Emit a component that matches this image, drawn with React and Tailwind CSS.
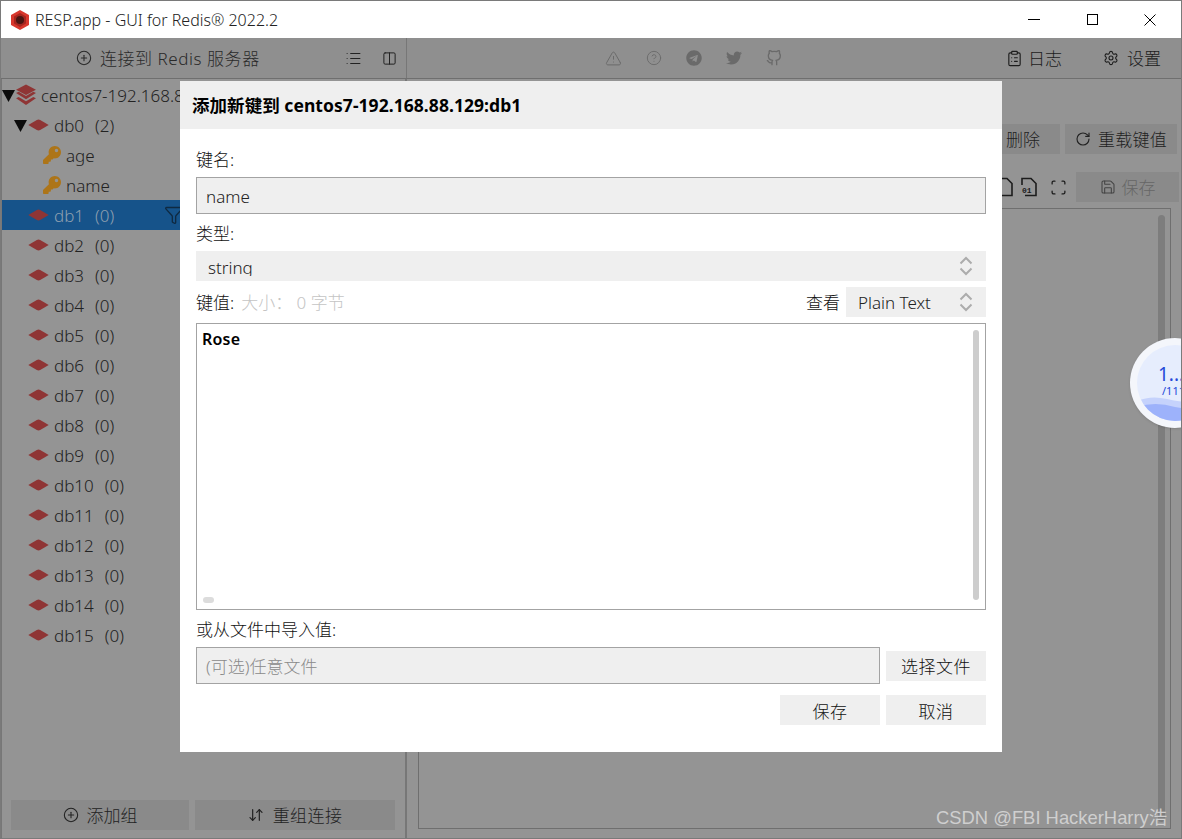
import React from "react";
import { CirclePlus, List, Columns2, TriangleAlert, CircleHelp, ClipboardList, Settings, RotateCw, Save, Scan, Funnel, ArrowDownUp } from "lucide-react";
import { FaTelegram, FaTwitter, FaKey } from "react-icons/fa";
import { FiGithub } from "react-icons/fi";

const font = { fontFamily: '"Noto Sans", "Noto Sans CJK SC", sans-serif' };

function Logo() {
  return (
    <svg width="18" height="20" viewBox="0 0 18 20">
      <polygon points="9,0 18,5 18,15 9,20 0,15 0,5" fill="#d8362c" />
      <polygon points="9,3 15,6.5 15,13.5 9,17 3,13.5 3,6.5" fill="#a5261f" />
      <circle cx="9" cy="10" r="4" fill="#4a1512" />
    </svg>
  );
}

function Diamond() {
  return (
    <svg width="21" height="12" viewBox="0 0 21 12">
      <path d="M0.3 6 L8.8 1 Q10.5 0.2 12.2 1 L20.7 6 L12.2 11 Q10.5 11.8 8.8 11 Z" fill="#8f3535" />
    </svg>
  );
}

function Layers() {
  return (
    <svg width="22" height="22" viewBox="0 0 21 21">
      <path d="M10.5 0.5 L20 5.5 L10.5 10.5 L1 5.5 Z" fill="#8f3535" />
      <path d="M1 8.5 L3.5 7.5 L10.5 11.5 L17.5 7.5 L20 8.5 L10.5 14.5 Z" fill="#8f3535" />
      <path d="M1 13.5 L3.5 12.5 L10.5 16.5 L17.5 12.5 L20 13.5 L10.5 20 Z" fill="#8f3535" />
    </svg>
  );
}

function Tri({ className }) {
  return (
    <svg width="13" height="13" viewBox="0 0 13 13" className={className}>
      <polygon points="0,1 13,1 6.5,13" fill="#0c0c0c" />
    </svg>
  );
}

function UpDown() {
  return (
    <svg width="14" height="20" viewBox="0 0 14 20" fill="none" stroke="#acacac" strokeWidth="2">
      <path d="M1.5 7.5 L7 2 L12.5 7.5" />
      <path d="M1.5 12.5 L7 18 L12.5 12.5" />
    </svg>
  );
}

function FileBin({ label }) {
  return (
    <svg width="18" height="20" viewBox="0 0 18 20" fill="none" stroke="#1c1c1c" strokeWidth="1.6">
      <path d="M2 8 V1.5 H11 L16 6.5 V18.5 H5" />
      <text x="2" y="16" fontSize="8" fontWeight="700" fill="#1c1c1c" stroke="none" fontFamily="Liberation Mono">{label}</text>
    </svg>
  );
}

function DbRow({ name, count, selected }) {
  return (
    <div className={`h-[30px] flex items-center pl-[26px] shrink-0 relative ${selected ? "bg-[#16538a]" : ""}`}>
      <Diamond />
      <span className={`ml-[5px] pt-[1px] text-[17px] font-light ${selected ? "text-[#8d9fb0]" : "text-[#222]"}`}>{name}</span>
      <span className={`ml-[11px] pt-[1px] text-[17px] font-light ${selected ? "text-[#8d9fb0]" : "text-[#222]"}`}>({count})</span>
      {selected && <Funnel size={20} strokeWidth={1.6} className="absolute left-[162px] top-[5px] text-[#0f2a42]" />}
    </div>
  );
}

function KeyRow({ name }) {
  return (
    <div className="h-[30px] flex items-center pl-[41px] shrink-0">
      <FaKey size={18} className="text-[#ad7519]" />
      <span className="ml-[5px] pt-[1px] text-[17px] font-light text-[#222]">{name}</span>
    </div>
  );
}

function DimBtn({ children, className }) {
  return <div className={`h-[30px] bg-[#8a8a8a] flex items-center justify-center text-[17px] text-[#222] ${className}`}>{children}</div>;
}

function LightBtn({ children, className }) {
  return <div className={`w-[100px] h-[30px] bg-[#efefef] flex items-center justify-center pt-[3px] text-[17px] text-[#111] font-light tracking-[0.5px] ${className || ""}`}>{children}</div>;
}

export default function App() {
  const dbs = ["db2", "db3", "db4", "db5", "db6", "db7", "db8", "db9", "db10", "db11", "db12", "db13", "db14", "db15"];
  return (
    <div className="relative w-[1182px] h-[839px] overflow-hidden bg-[#949494] flex flex-col border border-[#7a7a7a]" style={font}>
      {/* Title bar */}
      <div className="h-[37px] bg-white flex items-center pl-[10px] shrink-0">
        <Logo />
        <span className="ml-[6px] text-[16px] text-[#222] font-light">RESP.app - GUI for Redis® 2022.2</span>
        <div className="ml-auto flex items-center pr-[2px]">
          <div className="w-[58px] flex justify-center"><div className="w-[12px] h-px bg-black" /></div>
          <div className="w-[58px] flex justify-center"><div className="w-[11px] h-[11px] border border-black" /></div>
          <div className="w-[58px] flex justify-center">
            <svg width="12" height="12" viewBox="0 0 12 12" stroke="#000" strokeWidth="1"><path d="M0.5 0.5 L11.5 11.5 M11.5 0.5 L0.5 11.5" /></svg>
          </div>
        </div>
      </div>

      {/* Toolbar */}
      <div className="h-[41px] bg-[#8f8f8f] border-b border-[#6f6f6f] flex shrink-0">
        <div className="w-[406px] border-r border-[#777] flex items-center relative">
          <div className="flex items-center absolute left-[75px]">
            <CirclePlus size={16} strokeWidth={1.6} className="text-[#2a2a2a]" />
            <span className="ml-[8px] text-[17px] text-[#2a2a2a] font-light tracking-[0.55px] pt-[1px]">连接到 Redis 服务器</span>
          </div>
          <div className="ml-auto flex items-center gap-[20px] pr-[9px]">
            <List size={17} strokeWidth={1.6} className="text-[#222]" />
            <Columns2 size={15} strokeWidth={1.6} className="text-[#222]" />
          </div>
        </div>
        <div className="flex-1 flex items-center">
          <div className="ml-[198px] flex items-center gap-[24px] text-[#6a6a6a]">
            <TriangleAlert size={17} strokeWidth={1.4} />
            <CircleHelp size={16} strokeWidth={1.4} />
            <FaTelegram size={16} />
            <FaTwitter size={16} />
            <FiGithub size={16} strokeWidth={2} />
          </div>
          <div className="ml-auto flex items-center pr-[20px] text-[#1c1c1c]">
            <ClipboardList size={17} strokeWidth={1.6} />
            <span className="ml-[5px] text-[17px] font-light pt-[1px]">日志</span>
            <Settings size={16} strokeWidth={1.6} className="ml-[41px]" />
            <span className="ml-[8px] text-[17px] font-light pt-[1px]">设置</span>
          </div>
        </div>
      </div>

      {/* Main */}
      <div className="flex-1 flex min-h-0 border-l border-[#777]">
        {/* Sidebar */}
        <div className="w-[405px] border-r-2 border-[#777] flex flex-col shrink-0">
          <div className="flex-1 flex flex-col min-h-0 overflow-hidden pt-[1px]">
            <div className="h-[30px] flex items-center shrink-0">
              <Tri />
              <span className="flex"><Layers /></span>
              <span className="ml-[4px] pt-[1px] text-[17px] font-light text-[#222] whitespace-nowrap">centos7-192.168.88.129</span>
            </div>
            <div className="h-[30px] flex items-center shrink-0 pl-[12px]">
              <Tri />
              <span className="ml-[1px] flex"><Diamond /></span>
              <span className="ml-[5px] pt-[1px] text-[17px] font-light text-[#222]">db0</span>
              <span className="ml-[11px] pt-[1px] text-[17px] font-light text-[#222]">(2)</span>
            </div>
            <KeyRow name="age" />
            <KeyRow name="name" />
            <DbRow name="db1" count="0" selected />
            {dbs.map((d) => <DbRow key={d} name={d} count="0" />)}
          </div>
          <div className="flex gap-[6px] pl-[9px] pb-[8px] shrink-0">
            <DimBtn className="w-[178px]">
              <CirclePlus size={16} strokeWidth={1.6} />
              <span className="ml-[8px] font-light pt-[1px]">添加组</span>
            </DimBtn>
            <DimBtn className="w-[200px]">
              <ArrowDownUp size={16} strokeWidth={1.8} />
              <span className="ml-[9px] font-light pt-[1px] tracking-[0.4px]">重组连接</span>
            </DimBtn>
          </div>
        </div>

        {/* Right panel */}
        <div className="flex-1 flex flex-col pl-[11px] pr-[10px] pb-[9px] min-w-0">
          <div className="flex justify-end gap-[5px] pt-[45px]">
            <DimBtn className="w-[100px] font-light"><span className="ml-[26px] pt-[2px]">删除</span></DimBtn>
            <DimBtn className="w-[112px] mr-[-6px]">
              <RotateCw size={16} strokeWidth={1.7} />
              <span className="ml-[7px] font-light pt-[2px] tracking-[0.3px]">重载键值</span>
            </DimBtn>
          </div>
          <div className="flex justify-end items-center mt-[18px]">
            <FileBin label="" />
            <span className="ml-[6px] flex"><FileBin label="01" /></span>
            <Scan size={17} strokeWidth={1.8} className="ml-[12px] text-[#1c1c1c]" />
            <DimBtn className="w-[103px] ml-[9px] mr-[-8px] text-[#5f5f5f]">
              <Save size={16} strokeWidth={1.6} className="text-[#444]" />
              <span className="ml-[6px] font-light text-[#666] pt-[1px]">保存</span>
            </DimBtn>
          </div>
          <div className="flex-1 mt-[6px] border border-[#6f6f6f] flex justify-end pr-[5px] py-[6px]">
            <div className="w-[7px] h-full bg-[#7d7d7d] rounded-full" />
          </div>
        </div>
      </div>

      {/* Modal dialog */}
      <div className="absolute left-[179px] top-[80px] w-[822px] h-[671px] bg-white flex flex-col">
        <div className="h-[48px] bg-[#efefef] flex items-center pl-[12px] pt-[1px] shrink-0">
          <span className="text-[17.5px] font-bold text-black tracking-[0.05px]">添加新键到 centos7-192.168.88.129:db1</span>
        </div>
        <div className="flex-1 flex flex-col px-[16px] min-h-0">
          <div className="mt-[19px] h-[24px] flex items-center text-[17px] font-light text-[#111]">键名:</div>
          <div className="mt-[5px] h-[37px] bg-[#efefef] border border-[#a3a3a3] flex items-center px-[9px] pt-[2px] text-[17px] font-light text-[#222] shrink-0">name</div>
          <div className="mt-[7px] h-[24px] flex items-center pt-[1px] text-[17px] font-light text-[#111]">类型:</div>
          <div className="mt-[6px] h-[30px] bg-[#efefef] flex items-start pl-[12px] pr-[13px] overflow-hidden shrink-0 relative">
            <span className="text-[17px] font-light text-[#222] leading-[34px] h-[25px] overflow-hidden">string</span>
            <span className="ml-auto mt-[5px]"><UpDown /></span>
          </div>
          <div className="mt-[6px] h-[30px] flex items-center shrink-0">
            <span className="text-[17px] font-light text-[#111] pt-[1px]">键值:</span>
            <span className="ml-[7px] text-[17px] font-light text-[#c4c4c4] pt-[1px] whitespace-pre">大小： 0 字节</span>
            <span className="ml-auto text-[17px] font-light text-[#111] pt-[1px]">查看</span>
            <div className="ml-[6px] w-[140px] h-[30px] bg-[#efefef] flex items-center pl-[12px] pr-[13px]">
              <span className="text-[17px] font-light text-[#222] pt-[1px]">Plain Text</span>
              <span className="ml-auto"><UpDown /></span>
            </div>
          </div>
          <div className="mt-[6px] h-[287px] border border-[#a3a3a3] relative shrink-0 pl-[5px] pt-[3px]">
            <span className="text-[16px] font-semibold text-black leading-[20px] tracking-[0.2px]">Rose</span>
            <div className="absolute right-[6px] top-[6px] bottom-[9px] w-[6px] bg-[#cdcdcd] rounded-full" />
            <div className="absolute left-[6px] bottom-[6px] w-[11px] h-[6px] bg-[#dcdcdc] rounded-full" />
          </div>
          <div className="mt-[7px] h-[24px] flex items-center pt-[1px] text-[17px] font-light text-[#111]">或从文件中导入值:</div>
          <div className="mt-[6px] flex items-center gap-[6px] shrink-0">
            <div className="flex-1 h-[37px] bg-[#efefef] border border-[#a3a3a3] flex items-center px-[9px] pt-[3px] text-[17px] font-light text-[#8a8a8a]">(可选)任意文件</div>
            <LightBtn>选择文件</LightBtn>
          </div>
          <div className="mt-[11px] flex justify-end gap-[6px] shrink-0">
            <LightBtn>保存</LightBtn>
            <LightBtn>取消</LightBtn>
          </div>
        </div>
      </div>

      {/* Floating widget */}
      <div className="absolute left-[1129px] top-[337px] w-[90px] h-[90px] rounded-full bg-[#f4f6fb] shadow-sm flex items-center justify-center">
        <div className="w-[76px] h-[76px] rounded-full bg-[#e6edfd] relative overflow-hidden">
          <svg className="absolute left-0 top-0" width="76" height="76" viewBox="0 0 76 76">
            <path d="M0 56 Q14 50 30 54 Q52 60 76 54 V76 H0 Z" fill="#c5d2fc" />
            <path d="M0 62 Q18 56 38 62 Q58 66 76 60 V76 H0 Z" fill="#9db2fb" />
          </svg>
          <div className="absolute left-[21px] top-[17px] text-[19px] leading-[24px] text-[#2448d8] whitespace-nowrap">1...</div>
          <div className="absolute left-[25px] top-[39px] text-[11px] leading-[14px] text-[#2448d8] whitespace-nowrap">/111</div>
        </div>
      </div>

      {/* Watermark */}
      <div className="absolute left-[935px] top-[805px] text-[18.4px] leading-[24px] text-[#cfcfcf] whitespace-nowrap" style={{ fontFamily: '"Liberation Sans", "Noto Sans CJK SC", sans-serif' }}>CSDN @FBI HackerHarry浩</div>
    </div>
  );
}
